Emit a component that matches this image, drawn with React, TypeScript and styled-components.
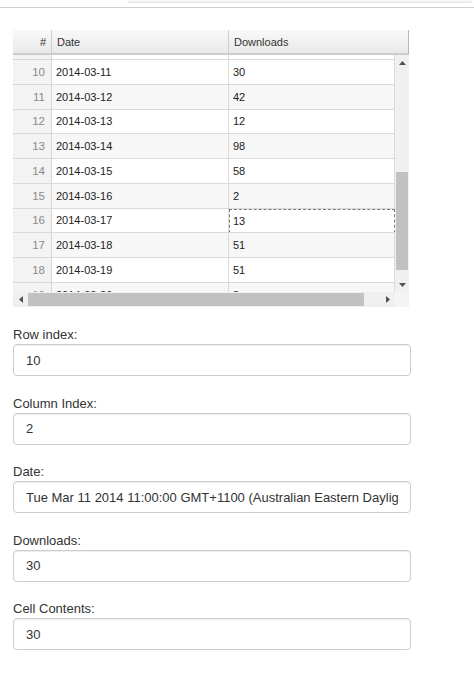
import React from 'react';
import styled, { createGlobalStyle, css } from 'styled-components';

const GlobalStyle = createGlobalStyle`
	html, body {
		margin: 0;
		padding: 0;
		background: #ffffff;
		font-family: "Liberation Sans", Arial, sans-serif;
		color: #333333;
	}
	* {
		box-sizing: border-box;
	}
`;

const rows = [
	{ id: 10, date: '2014-03-11', downloads: '30' },
	{ id: 11, date: '2014-03-12', downloads: '42' },
	{ id: 12, date: '2014-03-13', downloads: '12' },
	{ id: 13, date: '2014-03-14', downloads: '98' },
	{ id: 14, date: '2014-03-15', downloads: '58' },
	{ id: 15, date: '2014-03-16', downloads: '2' },
	{ id: 16, date: '2014-03-17', downloads: '13' },
	{ id: 17, date: '2014-03-18', downloads: '51' },
	{ id: 18, date: '2014-03-19', downloads: '51' },
	{ id: 19, date: '2014-03-20', downloads: '3' },
];

const fields = [
	{ label: 'Row index:', value: '10' },
	{ label: 'Column Index:', value: '2' },
	{ label: 'Date:', value: 'Tue Mar 11 2014 11:00:00 GMT+1100 (Australian Eastern Daylight Time)' },
	{ label: 'Downloads:', value: '30' },
	{ label: 'Cell Contents:', value: '30' },
];

const FOCUSED_ROW = 16;

const Arrow = ({ dir }: { dir: 'up' | 'down' | 'left' | 'right' }) => {
	const points = {
		up: '0,4 3.5,0 7,4',
		down: '0,0 3.5,4 7,0',
		left: '4,0 0,3.5 4,7',
		right: '0,0 4,3.5 0,7',
	}[dir];
	const vertical = dir === 'up' || dir === 'down';
	return (
		<svg width={vertical ? 7 : 4} height={vertical ? 4 : 7} viewBox={vertical ? '0 0 7 4' : '0 0 4 7'}>
			<polygon points={points} fill="#505050" />
		</svg>
	);
};

export default function App() {
	return (
		<>
			<GlobalStyle />
			<TopBar>
				<TopTab />
			</TopBar>
			<Page>
				<Grid>
					<HeaderRow>
						<HeadCell width={39} align="right">#</HeadCell>
						<HeadCell width={177}>Date</HeadCell>
						<HeadCell grow>Downloads</HeadCell>
					</HeaderRow>
					<BodyArea>
						<Viewport>
							{/* bottom sliver of the row scrolled under the header */}
							<Row odd={false} partial>
								<RowHeader />
								<Cell width={177} />
								<Cell grow />
							</Row>
							{rows.map((row) => (
								<Row key={row.id} odd={row.id % 2 === 1}>
									<RowHeader>{row.id}</RowHeader>
									<Cell width={177}>{row.date}</Cell>
									<Cell grow focused={row.id === FOCUSED_ROW}>
										{row.downloads}
									</Cell>
								</Row>
							))}
						</Viewport>
						<VScroll>
							<ScrollButton>
								<Arrow dir="up" />
							</ScrollButton>
							<VTrack>
								<VThumb />
							</VTrack>
							<ScrollButton>
								<Arrow dir="down" />
							</ScrollButton>
						</VScroll>
					</BodyArea>
					<HScrollRow>
						<HScroll>
							<ScrollButton horizontal>
								<Arrow dir="left" />
							</ScrollButton>
							<HTrack>
								<HThumb />
							</HTrack>
							<ScrollButton horizontal>
								<Arrow dir="right" />
							</ScrollButton>
						</HScroll>
						<Corner />
					</HScrollRow>
				</Grid>
				<Form>
					{fields.map((field) => (
						<FormGroup key={field.label}>
							<Label>{field.label}</Label>
							<Input readOnly value={field.value} />
						</FormGroup>
					))}
				</Form>
			</Page>
		</>
	);
}

const TopBar = styled.div`
	height: 8px;
	border-bottom: 1px solid #cfcfcf;
	padding-left: 128px;
`;

const TopTab = styled.div`
	width: 344px;
	height: 3px;
	background: #f5f5f5;
	border-bottom: 1px solid #e4e4e4;
	border-right: 1px solid #ececec;
`;

const Page = styled.div`
	padding: 22px 13px 0 13px;
`;

const Grid = styled.div`
	width: 396px;
	display: flex;
	flex-direction: column;
	font-size: 11px;
	color: #222222;
`;

const HeaderRow = styled.div`
	display: flex;
	height: 25px;
	background: linear-gradient(#f9f9f9, #e9e9e9);
	border-bottom: 2px solid #cdcdcd;
	border-right: 1px solid #b8b8b8;
`;

const HeadCell = styled.div<{ width?: number; grow?: boolean; align?: 'left' | 'right' }>(
	({ width, grow, align = 'left' }) => css`
		display: flex;
		align-items: center;
		justify-content: ${align === 'right' ? 'flex-end' : 'flex-start'};
		padding: 0 5px;
		border-right: 1px solid #cfcfcf;
		color: #333333;
		${width && `width: ${width}px; flex: none;`}
		${grow && `flex: 1; border-right: none;`}
	`,
);

const BodyArea = styled.div`
	display: flex;
	height: 237px;
`;

const Viewport = styled.div`
	flex: 1;
	overflow: hidden;
`;

const Row = styled.div<{ odd: boolean; partial?: boolean }>(
	({ odd, partial }) => css`
		display: flex;
		flex: none;
		height: ${partial ? '5px' : '24.75px'};
		border-bottom: 1px solid #dadada;
		background: ${odd ? '#f7f7f7' : '#ffffff'};
		overflow: hidden;
	`,
);

const RowHeader = styled.div`
	width: 39px;
	flex: none;
	display: flex;
	align-items: center;
	justify-content: flex-end;
	padding-right: 6px;
	background: #f3f3f3;
	color: #8a8a8a;
	border-right: 1px solid #d6d6d6;
	font-size: 11.5px;
`;

const Cell = styled.div<{ width?: number; grow?: boolean; focused?: boolean }>(
	({ width, grow, focused }) => css`
		display: flex;
		align-items: center;
		padding: 0 4px;
		border-right: 1px solid #dadada;
		white-space: nowrap;
		${width && `width: ${width}px; flex: none;`}
		${grow && `flex: 1;`}
		${focused &&
		css`
			border: 1px dashed #7a7a7a;
			padding-left: 3px;
			margin-bottom: -1px;
		`}
	`,
);

const VScroll = styled.div`
	width: 14px;
	flex: none;
	display: flex;
	flex-direction: column;
	background: #f0f0f0;
`;

const ScrollButton = styled.div<{ horizontal?: boolean }>(
	({ horizontal }) => css`
		flex: none;
		display: flex;
		align-items: center;
		justify-content: center;
		${horizontal ? 'width: 15px;' : 'height: 15px;'}
	`,
);

const VTrack = styled.div`
	flex: 1;
	display: flex;
	flex-direction: column;
	padding: 102px 1px 0 1px;
`;

const VThumb = styled.div`
	height: 98px;
	background: #c1c1c1;
`;

const HScrollRow = styled.div`
	display: flex;
	height: 15px;
`;

const HScroll = styled.div`
	flex: 1;
	display: flex;
	background: #f0f0f0;
`;

const HTrack = styled.div`
	flex: 1;
	display: flex;
	padding: 1px 0;
`;

const HThumb = styled.div`
	width: 336px;
	background: #c1c1c1;
`;

const Corner = styled.div`
	width: 14px;
	flex: none;
	background: #f4f4f4;
`;

const Form = styled.div`
	display: flex;
	flex-direction: column;
	gap: 18.5px;
	padding-top: 19px;
`;

const FormGroup = styled.div`
	display: flex;
	flex-direction: column;
`;

const Label = styled.label`
	font-size: 13px;
	line-height: 18px;
	color: #333333;
`;

const Input = styled.input`
	width: 398px;
	height: 32px;
	padding: 0 12px;
	border: 1px solid #cccccc;
	border-radius: 4px;
	box-shadow: inset 0 1px 1px rgba(0, 0, 0, 0.075);
	font-family: "Liberation Sans", Arial, sans-serif;
	font-size: 13px;
	color: #333333;
	background: #ffffff;
	outline: none;
`;
